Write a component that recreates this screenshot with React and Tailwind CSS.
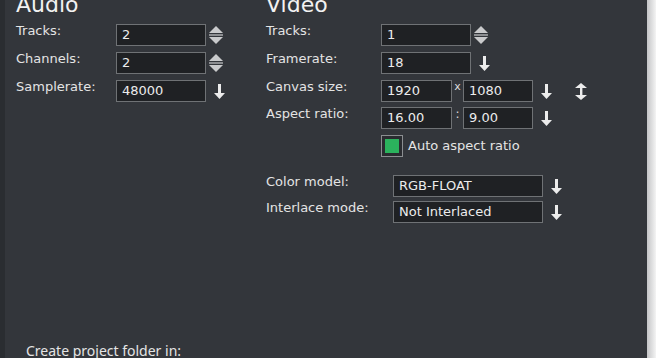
import React from 'react';

const DEJAVU = { fontFamily: '"DejaVu Sans", sans-serif' };

function Spinner() {
  return (
    <svg width="14" height="18" viewBox="0 0 14 18">
      <polygon points="7,0 14,7 0,7" fill="#c9cacc" />
      <rect x="0" y="8" width="14" height="2" fill="#8c8e91" />
      <polygon points="0,11 14,11 7,18" fill="#c9cacc" />
    </svg>
  );
}

function DownArrow() {
  return (
    <svg width="11" height="15" viewBox="0 0 11 15">
      <rect x="4" y="0" width="3" height="10" fill="#ececec" />
      <polygon points="0,9 11,9 5.5,15" fill="#ececec" />
    </svg>
  );
}

function UpDownArrow() {
  return (
    <svg width="12" height="17" viewBox="0 0 12 17">
      <polygon points="6,0 12,5 0,5" fill="#ececec" />
      <rect x="5" y="4" width="2.4" height="9" fill="#ececec" />
      <polygon points="0,12 12,12 6,17" fill="#ececec" />
    </svg>
  );
}

function Box({ value, w }) {
  return (
    <div className={`${w} h-[22px] bg-[#1f2124] border border-[#6f7275] flex items-center pl-[5px] pb-[1px] text-[13px] leading-[16px] text-[#ececec]`}>
      {value}
    </div>
  );
}

function IconCell({ children, align = 'center' }) {
  return (
    <div className={`ml-[3px] w-[20px] h-[22px] flex items-center ${align === 'start' ? 'justify-start' : 'justify-center'}`}>
      {children}
    </div>
  );
}

function Row({ label, labelW, children }) {
  return (
    <div className="flex items-start h-[22px]">
      <div className={`${labelW} text-[13px] leading-[14px] text-[#e4e4e4]`}>{label}</div>
      <div className="flex items-center">{children}</div>
    </div>
  );
}

function Heading({ children }) {
  return (
    <div className="-mt-[6px] h-[30px] text-[22px] leading-[22px] text-[#f2f2f2]">{children}</div>
  );
}

export default function App() {
  return (
    <div className="w-[656px] h-[358px] flex overflow-hidden" style={DEJAVU}>
      <div className="w-[5px] bg-[#2a2d31]" />
      <div className="w-[642px] bg-[#33363b] flex flex-col overflow-hidden">
        <div className="flex pl-[11px]">
          {/* audio */}
          <div className="w-[250px] flex flex-col">
            <Heading>Audio</Heading>
            <div className="flex flex-col gap-[6px]">
              <Row label="Tracks:" labelW="w-[100px]">
                <Box value="2" w="w-[90px]" />
                <IconCell align="start"><Spinner /></IconCell>
              </Row>
              <Row label="Channels:" labelW="w-[100px]">
                <Box value="2" w="w-[90px]" />
                <IconCell align="start"><Spinner /></IconCell>
              </Row>
              <Row label="Samplerate:" labelW="w-[100px]">
                <Box value="48000" w="w-[90px]" />
                <IconCell><DownArrow /></IconCell>
              </Row>
            </div>
          </div>

          {/* video */}
          <div className="flex-1 flex flex-col">
            <Heading>Video</Heading>
            <div className="flex flex-col gap-[6px]">
              <Row label="Tracks:" labelW="w-[115px]">
                <Box value="1" w="w-[90px]" />
                <IconCell align="start"><Spinner /></IconCell>
              </Row>
              <Row label="Framerate:" labelW="w-[115px]">
                <Box value="18" w="w-[90px]" />
                <IconCell><DownArrow /></IconCell>
              </Row>
              <Row label="Canvas size:" labelW="w-[115px]">
                <Box value="1920" w="w-[71px]" />
                <div className="w-[11px] h-[22px] text-[11px] leading-[14px] text-[#dcdcdc] text-center">x</div>
                <Box value="1080" w="w-[70px]" />
                <IconCell><DownArrow /></IconCell>
                <div className="ml-[15px] w-[20px] h-[22px] flex items-center justify-center">
                  <UpDownArrow />
                </div>
              </Row>
            </div>
            <div className="mt-[5px]">
              <Row label="Aspect ratio:" labelW="w-[115px]">
                <Box value="16.00" w="w-[71px]" />
                <div className="w-[11px] h-[22px] text-[12px] leading-[14px] text-[#dcdcdc] text-center">:</div>
                <Box value="9.00" w="w-[70px]" />
                <IconCell><DownArrow /></IconCell>
              </Row>
            </div>
            <div className="mt-[6px] pl-[115px] flex items-center h-[22px]">
              <div className="w-[22px] h-[22px] border border-[#8b8e91] bg-[#2a2c30] flex items-center justify-center">
                <div className="w-[14px] h-[14px] bg-[#2bb35d]" />
              </div>
              <span className="ml-[5px] text-[13px] leading-[16px] text-[#e4e4e4]">Auto aspect ratio</span>
            </div>
            <div className="mt-[18px] flex flex-col gap-[4px]">
              <Row label="Color model:" labelW="w-[127px]">
                <Box value="RGB-FLOAT" w="w-[150px]" />
                <IconCell><DownArrow /></IconCell>
              </Row>
              <Row label="Interlace mode:" labelW="w-[127px]">
                <Box value="Not Interlaced" w="w-[150px]" />
                <IconCell><DownArrow /></IconCell>
              </Row>
            </div>
          </div>
        </div>
        <div className="flex-1" />
        <div
          className="pl-[21px] -mb-[2px] h-[19px] text-[14px] leading-[19px] text-[#e4e4e4]"
          style={{ fontFamily: '"Noto Sans", sans-serif' }}
        >
          Create project folder in:
        </div>
      </div>
      <div className="flex-1 bg-gradient-to-r from-[#c4c5c7] to-[#f4f4f4]" />
    </div>
  );
}
